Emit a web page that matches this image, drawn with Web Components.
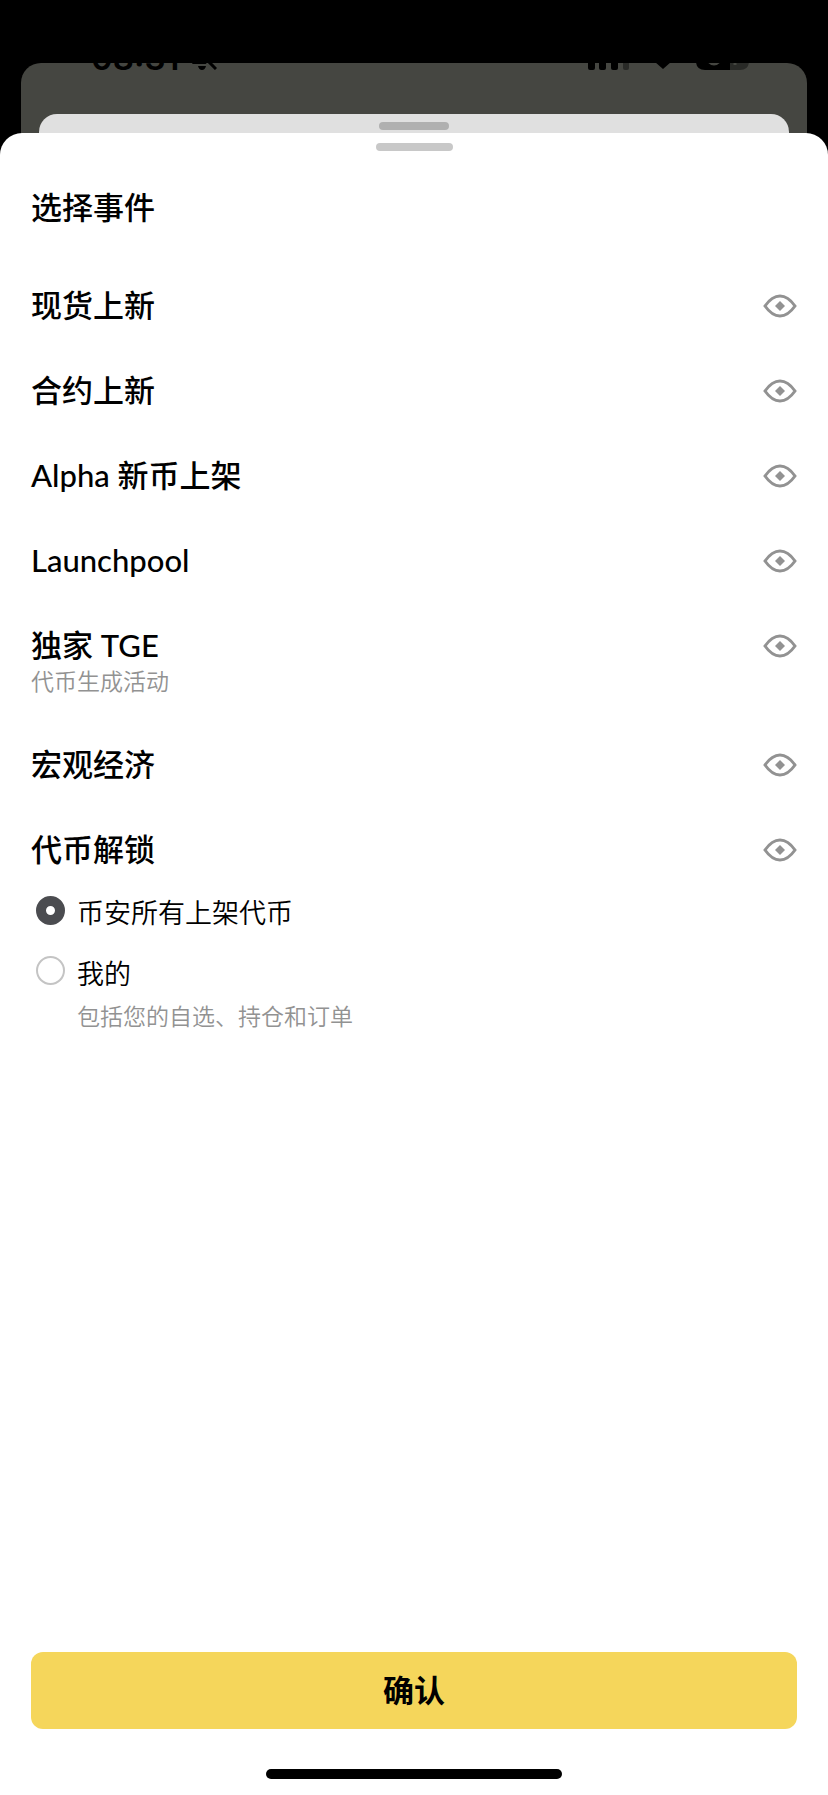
<!DOCTYPE html>
<html lang="zh-CN">
<head>
<meta charset="utf-8">
<meta name="viewport" content="width=device-width, initial-scale=1">
<title>选择事件</title>
<style>
body { margin: 0; background: #000; color: #000; font-family: Lato, "Noto Sans CJK SC", sans-serif; }
</style>
</head>
<body>
<sheet-stack>
  <status-card slot="back"></status-card>
  <bottom-sheet slot="middle" class="dimmed"></bottom-sheet>
  <bottom-sheet slot="front">
    <h1 slot="title">选择事件</h1>
    <event-row name="现货上新"></event-row>
    <event-row name="合约上新"></event-row>
    <event-row name="Alpha 新币上架"></event-row>
    <event-row name="Launchpool"></event-row>
    <event-row name="独家 TGE" note="代币生成活动"></event-row>
    <event-row name="宏观经济"></event-row>
    <event-row name="代币解锁"><unlock-scope></unlock-scope></event-row>
    <confirm-bar slot="footer">确认</confirm-bar>
  </bottom-sheet>
</sheet-stack>

<script>
class Base extends HTMLElement {
  connectedCallback() {
    if (this.shadowRoot) return;
    this.attachShadow({ mode: 'open' }).innerHTML = this.render();
  }
}

customElements.define('sheet-stack', class extends Base {
  render() {
    return `<style>
      :host { display: grid; grid-template-columns: minmax(0, 1fr); min-height: 100vh; }
      ::slotted(*) { grid-area: 1 / 1; }
      ::slotted([slot=back]) { margin: 63px 21px 0; }
      ::slotted([slot=middle]) { margin: 114px 39px 0; }
      ::slotted([slot=front]) { margin-top: 133px; }
    </style>
    <slot name="back"></slot><slot name="middle"></slot><slot name="front"></slot>`;
  }
});

customElements.define('status-card', class extends Base {
  render() {
    return `<style>
      :host { display: block; box-sizing: border-box; overflow: hidden; background: #454641; border-radius: 20px 20px 0 0; }
      .bar { display: flex; justify-content: space-between; align-items: flex-end; height: 30px; margin-top: -23px; padding: 0 57px 0 70px; }
      .side { display: flex; align-items: flex-end; gap: 10px; }
      time { font: 600 33px/24px Inter, sans-serif; height: 24px; }
      svg { display: block; }
    </style>
    <div class="bar">
      <div class="side"><time>08:31</time>
        <svg width="28" height="28" viewBox="0 0 28 28" aria-hidden="true"><path d="M3 22C6 18 5 14 6 10a7 7 0 0 1 14 0c1 5 0 8 3 12zM9 24h8q-1 4-4 4t-4-4z"/><path d="M1 1l26 26" stroke="#454641" stroke-width="6"/><path d="M1 1l26 26" stroke="#000" stroke-width="3"/></svg>
      </div>
      <svg width="163" height="28" viewBox="0 0 163 28" aria-hidden="true">
        <rect x="1" y="18" width="7" height="10" rx="2"/><rect x="12" y="13" width="7" height="15" rx="2"/><rect x="24" y="7" width="7" height="21" rx="2"/><rect x="36" y="1" width="6" height="27" rx="2" opacity=".4"/>
        <path d="M68 20q8-7 16 0l-8 7z"/>
        <path d="M118 1h25v27h-25q-9 0-9-9v-9q0-9 9-9z"/><path d="M143 1h10q9 0 9 9v9q0 9-9 9h-10z" opacity=".4"/>
        <circle cx="127" cy="16" r="6" fill="none" stroke="#454641" stroke-width="3"/><path d="M148 10v13" stroke="#454641" stroke-width="3"/>
      </svg>
    </div>`;
  }
});

customElements.define('bottom-sheet', class extends Base {
  render() {
    return `<style>
      :host { display: flex; flex-direction: column; box-sizing: border-box; background: #fff; border-radius: 22px 22px 0 0; padding: 0 31px; }
      :host(.dimmed) { background: #e0e0e0; border-radius: 18px 18px 0 0; }
      .grabber { align-self: center; width: 77px; height: 8px; margin-top: 10px; border-radius: 4px; background: #c8c8c8; }
      :host(.dimmed) .grabber { width: 70px; margin-top: 8px; background: #b0b0b0; }
      ::slotted(h1) { margin: 34px 0 55px; font-size: 31px; line-height: 44px; font-weight: 500; }
      main { display: flex; flex-direction: column; gap: 41px; flex: 1; }
    </style>
    <div class="grabber"></div>
    <slot name="title"></slot>
    <main><slot></slot></main>
    <slot name="footer"></slot>`;
  }
});

customElements.define('event-row', class extends Base {
  render() {
    const name = this.getAttribute('name'), note = this.getAttribute('note');
    return `<style>
      :host { display: block; }
      .line { display: flex; align-items: flex-start; justify-content: space-between; height: 44px; }
      h2 { margin: 0; font-size: 31px; line-height: 42px; font-weight: 500; }
      p { margin: 0; padding-bottom: 8px; font-size: 23px; line-height: 26px; font-weight: 350; color: #929292; }
      button { display: block; padding: 10px 0; border: 0; background: none; color: #929292; }
      svg { display: block; }
    </style>
    <div class="line"><h2>${name}</h2>
      <button type="button" aria-label="显示${name}"><svg width="34" height="24" viewBox="0 0 34 24" aria-hidden="true"><path d="M2 12Q9 2 17 2t15 10q-7 10-15 10T2 12z" fill="none" stroke="currentColor" stroke-width="3"/><path d="M17 7l5 5-5 5-5-5z" fill="currentColor"/></svg></button>
    </div>${note ? `<p>${note}</p>` : ''}<slot></slot>`;
  }
});

customElements.define('unlock-scope', class extends Base {
  render() {
    return `<style>
      :host { display: block; padding: 23px 0 0 5px; }
      fieldset { display: grid; gap: 25px; margin: 0; padding: 0; border: 0; min-width: 0; }
      .option { display: grid; grid-template-columns: 29px 1fr; column-gap: 12px; align-items: start; }
      input { appearance: none; box-sizing: border-box; width: 29px; height: 29px; margin: 1px 0 0; border: 2px solid #c4c4c4; border-radius: 50%; background: #fff; }
      .option + .option input { margin: 0; }
      input:checked { border: 10px solid #4b4c50; }
      label { font-size: 27px; line-height: 36px; font-weight: 350; }
      p { grid-column: 2; margin: 10px 0 0; font-size: 23px; line-height: 28px; font-weight: 350; color: #929292; }
    </style>
    <fieldset aria-label="代币解锁">
      <div class="option"><input type="radio" name="scope" id="all" checked><label for="all">币安所有上架代币</label></div>
      <div class="option"><input type="radio" name="scope" id="mine" aria-describedby="hint"><label for="mine">我的</label><p id="hint">包括您的自选、持仓和订单</p></div>
    </fieldset>`;
  }
});

customElements.define('confirm-bar', class extends Base {
  render() {
    return `<style>
      :host { display: flex; flex-direction: column; align-items: center; gap: 40px; padding: 40px 0 16px; }
      button { width: 100%; height: 77px; padding: 0 0 2px; border: 0; border-radius: 12px; background: #f5d65b; color: #000; font: inherit; font-size: 31px; font-weight: 700; line-height: 44px; }
      .home { width: 296px; height: 10px; border-radius: 5px; background: #000; }
    </style>
    <button type="button"><slot></slot></button>
    <div class="home"></div>`;
  }
});
</script>
</body>
</html>
